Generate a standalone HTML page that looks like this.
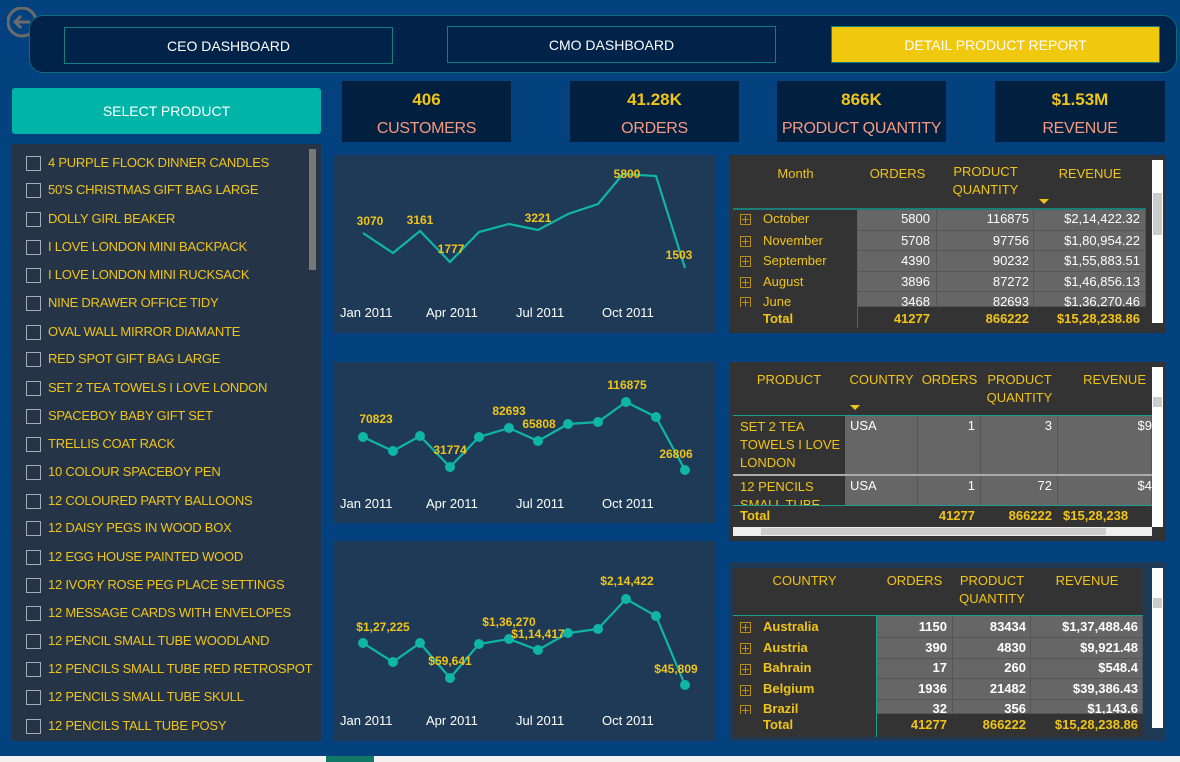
<!DOCTYPE html>
<html><head><meta charset="utf-8"><style>
*{margin:0;padding:0;box-sizing:border-box}
body{width:1180px;height:762px;background:#04417f;position:relative;overflow:hidden;font-family:"Liberation Sans",sans-serif;font-size:14px}
.a{position:absolute}
.nav{left:29px;top:15px;width:1148px;height:58px;background:#012349;border:1px solid #0d6c74;border-radius:14px}
.btn{position:absolute;height:37px;border:1px solid #0f7f83;background:#012349;color:#fff;font-size:14px;display:flex;align-items:center;justify-content:center}
.kpi{position:absolute;top:81px;height:61px;background:#011f3f;text-align:center}
.kpi .v{color:#f0c419;font-weight:bold;font-size:17px;margin-top:9px;height:22px}
.kpi .l{color:#f79a82;font-size:16px;margin-top:8px;letter-spacing:-0.3px}
.list{left:12px;top:144px;width:309px;height:597px;background:#253547}
.it{position:absolute;left:14px;color:#f0c419;font-size:13px;letter-spacing:-0.25px;white-space:nowrap}
.it:before{content:"";position:absolute;left:0;top:1px;width:13px;height:13px;border:1px solid #aab}
.it span{margin-left:22px}
.ch{position:absolute;left:333px;width:383px;background:#1e3a56}
.tb{position:absolute;background:#333;left:730px;width:436px}
.c{position:absolute;color:#fff;font-size:13px;white-space:nowrap}
.h{position:absolute;color:#f0c419;font-size:13px;text-align:center;line-height:18px}
.y{color:#f0c419}
.b{font-weight:bold}
.r{text-align:right}
.cell{position:absolute;background:#666;border-right:1px solid #555;border-bottom:1px solid #555}
.pl{position:absolute;width:11px;height:11px;border:1px solid #b8901a;left:10px}
.pl:before{content:"";position:absolute;left:4px;top:1px;width:1px;height:7px;background:#b8901a}
.pl:after{content:"";position:absolute;left:1px;top:4px;width:7px;height:1px;background:#b8901a}
.sb{position:absolute;background:#fff;width:11px}
</style></head><body>

<svg class="a" style="left:7px;top:7px" width="32" height="32"><circle cx="15" cy="15" r="14" fill="none" stroke="#6b6b6b" stroke-width="3"/><path d="M23 15H8M14 9L8 15L14 21" fill="none" stroke="#6b6b6b" stroke-width="3"/></svg>
<div class="a nav"></div>
<div class="btn" style="left:64px;top:27px;width:329px">CEO DASHBOARD</div>
<div class="btn" style="left:447px;top:26px;width:329px">CMO DASHBOARD</div>
<div class="btn" style="left:831px;top:26px;width:329px;background:#f0c80e;color:#fff">DETAIL PRODUCT REPORT</div>

<div class="a" style="left:12px;top:88px;width:309px;height:46px;background:#00b5a8;border-radius:3px;color:#fff;display:flex;align-items:center;justify-content:center">SELECT PRODUCT</div>

<div class="kpi" style="left:342px;width:169px"><div class="v">406</div><div class="l">CUSTOMERS</div></div>
<div class="kpi" style="left:570px;width:169px"><div class="v">41.28K</div><div class="l">ORDERS</div></div>
<div class="kpi" style="left:777px;width:169px"><div class="v">866K</div><div class="l">PRODUCT QUANTITY</div></div>
<div class="kpi" style="left:995px;width:170px"><div class="v">$1.53M</div><div class="l">REVENUE</div></div>

<div class="a list">
<div class="a" style="left:297px;top:5px;width:7px;height:121px;background:#777"></div>
<div class="it" style="top:11px"><span>4 PURPLE FLOCK DINNER CANDLES</span></div>
<div class="it" style="top:38px"><span>50'S CHRISTMAS GIFT BAG LARGE</span></div>
<div class="it" style="top:67px"><span>DOLLY GIRL BEAKER</span></div>
<div class="it" style="top:95px"><span>I LOVE LONDON MINI BACKPACK</span></div>
<div class="it" style="top:123px"><span>I LOVE LONDON MINI RUCKSACK</span></div>
<div class="it" style="top:151px"><span>NINE DRAWER OFFICE TIDY</span></div>
<div class="it" style="top:180px"><span>OVAL WALL MIRROR DIAMANTE</span></div>
<div class="it" style="top:207px"><span>RED SPOT GIFT BAG LARGE</span></div>
<div class="it" style="top:236px"><span>SET 2 TEA TOWELS I LOVE LONDON</span></div>
<div class="it" style="top:264px"><span>SPACEBOY BABY GIFT SET</span></div>
<div class="it" style="top:292px"><span>TRELLIS COAT RACK</span></div>
<div class="it" style="top:320px"><span>10 COLOUR SPACEBOY PEN</span></div>
<div class="it" style="top:349px"><span>12 COLOURED PARTY BALLOONS</span></div>
<div class="it" style="top:376px"><span>12 DAISY PEGS IN WOOD BOX</span></div>
<div class="it" style="top:405px"><span>12 EGG HOUSE PAINTED WOOD</span></div>
<div class="it" style="top:433px"><span>12 IVORY ROSE PEG PLACE SETTINGS</span></div>
<div class="it" style="top:461px"><span>12 MESSAGE CARDS WITH ENVELOPES</span></div>
<div class="it" style="top:489px"><span>12 PENCIL SMALL TUBE WOODLAND</span></div>
<div class="it" style="top:517px"><span>12 PENCILS SMALL TUBE RED RETROSPOT</span></div>
<div class="it" style="top:545px"><span>12 PENCILS SMALL TUBE SKULL</span></div>
<div class="it" style="top:574px"><span>12 PENCILS TALL TUBE POSY</span></div>
</div>

<div class="ch" style="top:155px;height:178px"></div>
<div class="ch" style="top:362px;height:161px"></div>
<div class="ch" style="top:541px;height:200px"></div>
<svg class="a" style="left:0;top:0" width="1180" height="762" font-family="Liberation Sans, sans-serif">
<g fill="none" stroke="#0fb5a6" stroke-width="2.2">
<polyline points="363,233 393,253 420,231 450,262 479,232 509,224 538,230 568,214 598,204 623,174 656,176 685,268"/>
<polyline points="363,437 393,451 420,436 450,467 479,437 509,428 538,441 568,424 598,422 626,402 656,417 685,470"/>
<polyline points="363,643 393,662 420,643 450,678 479,644 509,639 538,650 568,633 598,629 626,599 656,616 685,685"/>
</g>
<g fill="#0fb5a6">
<circle cx="363" cy="437" r="5"/><circle cx="393" cy="451" r="5"/><circle cx="420" cy="436" r="5"/><circle cx="450" cy="467" r="5"/><circle cx="479" cy="437" r="5"/><circle cx="509" cy="428" r="5"/><circle cx="538" cy="441" r="5"/><circle cx="568" cy="424" r="5"/><circle cx="598" cy="422" r="5"/><circle cx="626" cy="402" r="5"/><circle cx="656" cy="417" r="5"/><circle cx="685" cy="470" r="5"/>
<circle cx="363" cy="643" r="5"/><circle cx="393" cy="662" r="5"/><circle cx="420" cy="643" r="5"/><circle cx="450" cy="678" r="5"/><circle cx="479" cy="644" r="5"/><circle cx="509" cy="639" r="5"/><circle cx="538" cy="650" r="5"/><circle cx="568" cy="633" r="5"/><circle cx="598" cy="629" r="5"/><circle cx="626" cy="599" r="5"/><circle cx="656" cy="616" r="5"/><circle cx="685" cy="685" r="5"/>
</g>
<g fill="#f0c419" font-size="12" font-weight="bold" text-anchor="middle">
<text x="370" y="225">3070</text><text x="420" y="224">3161</text><text x="451" y="253">1777</text><text x="538" y="222">3221</text><text x="627" y="178">5800</text><text x="679" y="259">1503</text>
<text x="376" y="423">70823</text><text x="450" y="454">31774</text><text x="509" y="415">82693</text><text x="539" y="428">65808</text><text x="627" y="389">116875</text><text x="676" y="458">26806</text>
<text x="383" y="631">$1,27,225</text><text x="450" y="665">$59,641</text><text x="509" y="626">$1,36,270</text><text x="538" y="638">$1,14,417</text><text x="627" y="585">$2,14,422</text><text x="676" y="673">$45,809</text>
</g>
<g fill="#fff" font-size="13">
<text x="340" y="317">Jan 2011</text><text x="426" y="317">Apr 2011</text><text x="516" y="317">Jul 2011</text><text x="602" y="317">Oct 2011</text>
<text x="340" y="508">Jan 2011</text><text x="426" y="508">Apr 2011</text><text x="516" y="508">Jul 2011</text><text x="602" y="508">Oct 2011</text>
<text x="340" y="725">Jan 2011</text><text x="426" y="725">Apr 2011</text><text x="516" y="725">Jul 2011</text><text x="602" y="725">Oct 2011</text>
</g>
</svg>

<!-- Table 1 -->
<div class="tb" style="top:155px;height:178px">
<div class="h" style="left:3px;top:10px;width:125px">Month</div>
<div class="h" style="left:128px;top:10px;width:79px">ORDERS</div>
<div class="h" style="left:207px;top:8px;width:97px">PRODUCT<br>QUANTITY</div>
<div class="h" style="left:304px;top:10px;width:112px">REVENUE</div>
<div class="a" style="left:309px;top:44px;border:5px solid transparent;border-top:5px solid #f0c419"></div>
<div class="a" style="left:3px;top:53px;width:413px;height:2px;background:#1c7e7a"></div>
<div class="a" style="left:127px;top:55px;width:1px;height:118px;background:#1c7e7a"></div>
<div class="cell" style="left:128px;top:55px;width:79px;height:97px"></div>
<div class="cell" style="left:207px;top:55px;width:97px;height:97px"></div>
<div class="cell" style="left:304px;top:55px;width:112px;height:97px"></div>
<div class="a" style="left:128px;top:75px;width:288px;height:1px;background:#555"></div>
<div class="a" style="left:128px;top:95px;width:288px;height:1px;background:#555"></div>
<div class="a" style="left:128px;top:116px;width:288px;height:1px;background:#555"></div>
<div class="a" style="left:128px;top:136px;width:288px;height:1px;background:#555"></div>
<div class="pl" style="top:59px"></div><div class="c y" style="left:33px;top:56px">October</div>
<div class="pl" style="top:81px"></div><div class="c y" style="left:33px;top:78px">November</div>
<div class="pl" style="top:101px"></div><div class="c y" style="left:33px;top:98px">September</div>
<div class="pl" style="top:122px"></div><div class="c y" style="left:33px;top:119px">August</div>
<div class="a" style="left:0;top:138px;width:416px;height:14px;overflow:hidden">
<div class="pl" style="top:4px"></div><div class="c y" style="left:33px;top:1px">June</div>
<div class="c r" style="left:128px;top:1px;width:72px">3468</div><div class="c r" style="left:207px;top:1px;width:92px">82693</div><div class="c r" style="left:304px;top:1px;width:106px">$1,36,270.46</div></div>
<div class="c r" style="left:128px;top:56px;width:72px">5800</div><div class="c r" style="left:207px;top:56px;width:92px">116875</div><div class="c r" style="left:304px;top:56px;width:106px">$2,14,422.32</div>
<div class="c r" style="left:128px;top:78px;width:72px">5708</div><div class="c r" style="left:207px;top:78px;width:92px">97756</div><div class="c r" style="left:304px;top:78px;width:106px">$1,80,954.22</div>
<div class="c r" style="left:128px;top:98px;width:72px">4390</div><div class="c r" style="left:207px;top:98px;width:92px">90232</div><div class="c r" style="left:304px;top:98px;width:106px">$1,55,883.51</div>
<div class="c r" style="left:128px;top:119px;width:72px">3896</div><div class="c r" style="left:207px;top:119px;width:92px">87272</div><div class="c r" style="left:304px;top:119px;width:106px">$1,46,856.13</div>
<div class="c y b" style="left:33px;top:156px">Total</div>
<div class="c y b r" style="left:128px;top:156px;width:72px">41277</div><div class="c y b r" style="left:207px;top:156px;width:92px">866222</div><div class="c y b r" style="left:304px;top:156px;width:106px">$15,28,238.86</div>
<div class="sb" style="left:422px;top:5px;height:163px"><div class="a" style="left:1px;top:33px;width:9px;height:42px;background:#ccc"></div></div>
</div>

<!-- Table 2 -->
<div class="tb" style="top:362px;height:179px">
<div class="h" style="left:3px;top:9px;width:112px">PRODUCT</div>
<div class="h" style="left:115px;top:9px;width:73px">COUNTRY</div>
<div class="h" style="left:188px;top:9px;width:63px">ORDERS</div>
<div class="h" style="left:251px;top:9px;width:77px">PRODUCT<br>QUANTITY</div>
<div class="h" style="left:328px;top:9px;width:94px;text-align:right;padding-right:6px">REVENUE</div>
<div class="a" style="left:120px;top:43px;border:5px solid transparent;border-top:5px solid #f0c419"></div>
<div class="a" style="left:3px;top:53px;width:419px;height:1px;background:#1c9e94"></div>
<div class="cell" style="left:115px;top:54px;width:73px;height:90px"></div>
<div class="cell" style="left:188px;top:54px;width:63px;height:90px"></div>
<div class="cell" style="left:251px;top:54px;width:77px;height:90px"></div>
<div class="cell" style="left:328px;top:54px;width:94px;height:90px"></div>
<div class="a" style="left:3px;top:112px;width:419px;height:2px;background:#aaa"></div>
<div class="c y" style="left:10px;top:56px;line-height:18px">SET 2 TEA<br>TOWELS I LOVE<br>LONDON</div>
<div class="c" style="left:120px;top:56px">USA</div><div class="c r" style="left:188px;top:56px;width:57px">1</div><div class="c r" style="left:251px;top:56px;width:71px">3</div><div class="c r" style="left:328px;top:56px;width:94px;overflow:hidden">$9</div>
<div class="a" style="left:0;top:114px;width:422px;height:29px;overflow:hidden">
<div class="c y" style="left:10px;top:2px;line-height:18px">12 PENCILS<br>SMALL TUBE</div>
<div class="c" style="left:120px;top:2px">USA</div><div class="c r" style="left:188px;top:2px;width:57px">1</div><div class="c r" style="left:251px;top:2px;width:71px">72</div><div class="c r" style="left:328px;top:2px;width:94px">$4</div></div>
<div class="a" style="left:3px;top:143px;width:419px;height:1px;background:#1c9e94"></div>
<div class="c y b" style="left:10px;top:146px">Total</div>
<div class="c y b r" style="left:188px;top:146px;width:57px">41277</div><div class="c y b r" style="left:251px;top:146px;width:71px">866222</div><div class="c y b" style="left:333px;top:146px;width:89px;overflow:hidden">$15,28,238</div>
<div class="sb" style="left:422px;top:5px;height:160px"><div class="a" style="left:1px;top:30px;width:9px;height:10px;background:#ccc"></div></div>
<div class="a" style="left:3px;top:165px;width:419px;height:9px;background:#eee"><div class="a" style="left:28px;top:1px;width:345px;height:7px;background:#ccc"></div></div>
</div>

<!-- Table 3 -->
<div class="tb" style="top:562px;height:179px;background:#1e3a56">
<div class="a" style="left:3px;top:6px;width:410px;height:169px;background:#333"></div>
<div class="h" style="left:3px;top:10px;width:143px">COUNTRY</div>
<div class="h" style="left:146px;top:10px;width:77px">ORDERS</div>
<div class="h" style="left:223px;top:10px;width:78px">PRODUCT<br>QUANTITY</div>
<div class="h" style="left:301px;top:10px;width:112px">REVENUE</div>
<div class="a" style="left:3px;top:53px;width:410px;height:1px;background:#1c9e94"></div>
<div class="a" style="left:146px;top:54px;width:1px;height:121px;background:#1c9e94"></div>
<div class="cell" style="left:147px;top:54px;width:76px;height:98px"></div>
<div class="cell" style="left:223px;top:54px;width:78px;height:98px"></div>
<div class="cell" style="left:301px;top:54px;width:112px;height:98px"></div>
<div class="a" style="left:147px;top:75px;width:266px;height:1px;background:#555"></div>
<div class="a" style="left:147px;top:96px;width:266px;height:1px;background:#555"></div>
<div class="a" style="left:147px;top:116px;width:266px;height:1px;background:#555"></div>
<div class="a" style="left:147px;top:137px;width:266px;height:1px;background:#555"></div>
<div class="pl" style="top:60px"></div><div class="c y b" style="left:33px;top:57px">Australia</div>
<div class="pl" style="top:81px"></div><div class="c y b" style="left:33px;top:78px">Austria</div>
<div class="pl" style="top:102px"></div><div class="c y b" style="left:33px;top:98px">Bahrain</div>
<div class="pl" style="top:123px"></div><div class="c y b" style="left:33px;top:119px">Belgium</div>
<div class="c b r" style="left:147px;top:57px;width:70px">1150</div><div class="c b r" style="left:223px;top:57px;width:73px">83434</div><div class="c b r" style="left:301px;top:57px;width:107px">$1,37,488.46</div>
<div class="c b r" style="left:147px;top:78px;width:70px">390</div><div class="c b r" style="left:223px;top:78px;width:73px">4830</div><div class="c b r" style="left:301px;top:78px;width:107px">$9,921.48</div>
<div class="c b r" style="left:147px;top:98px;width:70px">17</div><div class="c b r" style="left:223px;top:98px;width:73px">260</div><div class="c b r" style="left:301px;top:98px;width:107px">$548.4</div>
<div class="c b r" style="left:147px;top:119px;width:70px">1936</div><div class="c b r" style="left:223px;top:119px;width:73px">21482</div><div class="c b r" style="left:301px;top:119px;width:107px">$39,386.43</div>
<div class="a" style="left:0;top:138px;width:413px;height:14px;overflow:hidden">
<div class="pl" style="top:5px"></div><div class="c y b" style="left:33px;top:1px">Brazil</div>
<div class="c b r" style="left:147px;top:1px;width:70px">32</div><div class="c b r" style="left:223px;top:1px;width:73px">356</div><div class="c b r" style="left:301px;top:1px;width:107px">$1,143.6</div></div>
<div class="c y b" style="left:33px;top:155px">Total</div>
<div class="c y b r" style="left:147px;top:155px;width:70px">41277</div><div class="c y b r" style="left:223px;top:155px;width:73px">866222</div><div class="c y b r" style="left:301px;top:155px;width:107px">$15,28,238.86</div>
<div class="sb" style="left:422px;top:6px;height:160px"><div class="a" style="left:1px;top:30px;width:9px;height:10px;background:#ccc"></div></div>
</div>

<div class="a" style="left:0;top:756px;width:1180px;height:6px;background:#f3f2f1"></div>
<div class="a" style="left:326px;top:756px;width:48px;height:6px;background:#117865"></div>
</body></html>
